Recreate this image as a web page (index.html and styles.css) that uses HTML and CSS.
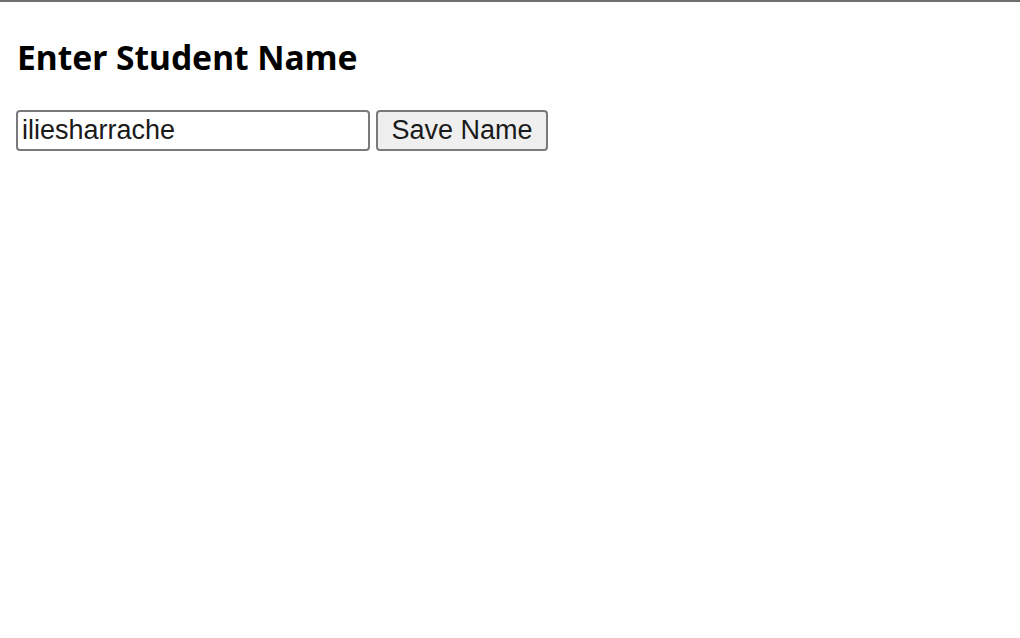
FILE: index.html
```html
<!DOCTYPE html>
<html>
<head>
<meta charset="utf-8">
<link rel="stylesheet" href="styles.css">
</head>
<body>
<div class="topline"></div>
<main class="page">
  <h1 class="title">Enter Student Name</h1>
  <form class="row">
    <input class="name-input" type="text" value="iliesharrache">
    <button class="save-btn" type="button">Save Name</button>
  </form>
</main>
</body>
</html>
```

FILE: styles.css
```css
html, body {
  margin: 0;
  padding: 0;
  background: #ffffff;
}
.topline {
  height: 2px;
  background: #6e6e6e;
}
.page {
  padding: 0 16px;
}
.title {
  font-family: "Noto Sans", "Open Sans", sans-serif;
  font-weight: 700;
  font-size: 33.6px;
  line-height: 40px;
  margin: 35px 0 0 1px;
  color: #000;
}
.row {
  display: flex;
  gap: 6px;
  margin-top: 33px;
}
.name-input {
  box-sizing: border-box;
  width: 354px;
  height: 41px;
  border: 2px solid #7a7a7a;
  border-radius: 4px;
  padding: 0 4px;
  font-family: "Liberation Sans", Arial, sans-serif;
  font-size: 27px;
  color: #1a1a1a;
  background: #fff;
  outline: none;
}
.save-btn {
  box-sizing: border-box;
  width: 172px;
  height: 41px;
  border: 2px solid #7a7a7a;
  border-radius: 4px;
  background: #efefef;
  font-family: "Liberation Sans", Arial, sans-serif;
  font-size: 27px;
  color: #1a1a1a;
  padding: 0;
}
```
